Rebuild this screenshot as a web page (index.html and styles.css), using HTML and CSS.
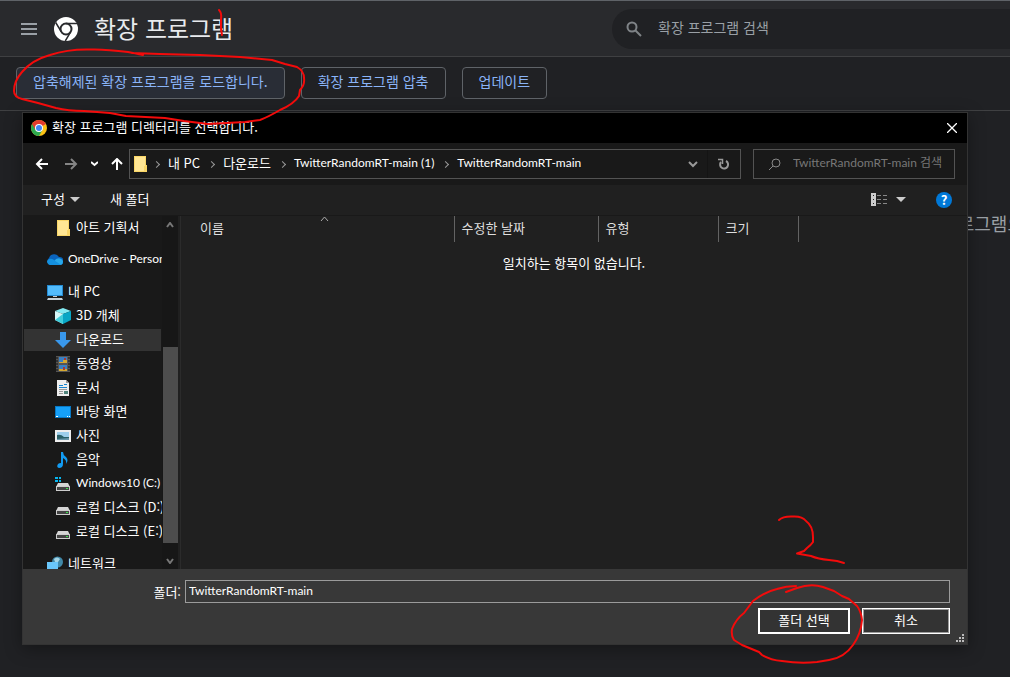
FILE: index.html
```html
<!DOCTYPE html>
<html lang="ko">

<head>
    <meta charset="UTF-8">
    <meta name="viewport" content="width=device-width, initial-scale=1.0">
    <title>확장 프로그램</title>
    <link rel="stylesheet" href="styles.css">
</head>

<body>
    <header class="topbar">
        <div class="brand">
            <button class="menu-button" aria-label="메뉴"><span></span><span></span><span></span></button>
            <svg class="logo" viewBox="0 0 24 24" width="24" height="24">
                <circle cx="12" cy="12" r="12" fill="#fff" />
                <circle cx="12" cy="12" r="5.500" fill="none" stroke="#292a2d" stroke-width="2" />
                <path d="M12 6.500H23M16.800 14.700L11.300 24M7.200 14.700L1.700 5.500" fill="none" stroke="#292a2d" stroke-width="1.500" />
            </svg>
            <h1>확장 프로그램</h1>
        </div>
        <label class="search">
            <svg viewBox="0 0 16 16" width="16" height="16" fill="none" stroke="#7f8387" stroke-width="2">
                <circle cx="6" cy="6" r="4.500" />
                <path d="M9.500 9.500L15 15" />
            </svg>
            <input type="search" placeholder="확장 프로그램 검색" aria-label="확장 프로그램 검색">
        </label>
    </header>

    <nav class="actions">
        <button class="active">압축해제된 확장 프로그램을 로드합니다.</button>
        <button>확장 프로그램 압축</button>
        <button>업데이트</button>
    </nav>

    <main class="page">
        <p>로그램으</p>
    </main>

    <section class="dialog" role="dialog" aria-labelledby="dialog-title">
        <div class="titlebar">
            <svg viewBox="0 0 16 16" width="16" height="16">
                <circle cx="8" cy="8" r="8" fill="#fbc116" />
                <path d="M8 8L1.100 4A8 8 0 0 1 14.900 4Z" fill="#e33b2e" />
                <path d="M8 8L1.100 4A8 8 0 0 0 8 16L11.500 10Z" fill="#2da94f" />
                <path d="M1.100 4L4.500 10L8 4Z" fill="#e33b2e" />
                <circle cx="8" cy="8" r="4" fill="#fff" />
                <circle cx="8" cy="8" r="3" fill="#4285f4" />
            </svg>
            <h2 id="dialog-title">확장 프로그램 디렉터리를 선택합니다.</h2>
            <button class="close" aria-label="닫기">
                <svg viewBox="0 0 10 10" width="10" height="10" stroke="#fff" stroke-width="1.300"><path d="M0 0L10 10M10 0L0 10" /></svg>
            </button>
        </div>

        <div class="address-row">
            <div class="history">
                <button aria-label="뒤로"><svg viewBox="0 0 13 12" width="13" height="12" fill="none" stroke="#fff" stroke-width="2"><path d="M13 6H2M7 1L2 6L7 11" /></svg></button>
                <button aria-label="앞으로"><svg viewBox="0 0 13 12" width="13" height="12" fill="none" stroke="#858585" stroke-width="2"><path d="M0 6H11M6 1L11 6L6 11" /></svg></button>
                <button class="recent" aria-label="최근 위치"><svg viewBox="0 0 7 6" width="7" height="6" fill="none" stroke="#fff" stroke-width="2"><path d="M0 1L3.500 4L7 1" /></svg></button>
                <button aria-label="위로"><svg viewBox="0 0 12 12" width="12" height="12" fill="none" stroke="#fff" stroke-width="2"><path d="M6 12V1M1 6L6 1L11 6" /></svg></button>
            </div>
            <div class="address">
                <svg viewBox="0 0 14 16" width="14" height="16"><path d="M0 0H12V9H13V16H0Z" fill="#f9d667" /><path d="M1 1H11V10H10V15H1Z" fill="#ffe694" /></svg>
                <i class="sep"></i><a href="#">내 PC</a>
                <i class="sep"></i><a href="#">다운로드</a>
                <i class="sep"></i><a class="latin" href="#">TwitterRandomRT-main (1)</a>
                <i class="sep"></i><a class="latin" href="#">TwitterRandomRT-main</a>
                <button class="drop" aria-label="이전 위치"><svg viewBox="0 0 10 8" width="10" height="8" fill="none" stroke="#999" stroke-width="2"><path d="M1 1L5 5L9 1" /></svg></button>
                <button class="reload" aria-label="새로 고침"><svg viewBox="0 0 12 12" width="12" height="12" fill="none" stroke="#999" stroke-width="2"><path d="M3 4A4 4 0 1 0 8 3" /><path d="M0 1.500H4.500V6" stroke-width="1.500" /></svg></button>
            </div>
            <label class="folder-search">
                <svg viewBox="0 0 13 13" width="13" height="13" fill="none" stroke="#888"><circle cx="8" cy="5" r="4" /><path d="M5 8L1 12" /></svg>
                <input class="latin" type="search" placeholder="TwitterRandomRT-main 검색" aria-label="TwitterRandomRT-main 검색">
            </label>
        </div>

        <div class="commands">
            <button>구성 <i class="caret"></i></button>
            <button>새 폴더</button>
            <button class="view" aria-label="보기">
                <svg viewBox="0 0 17 13" width="17" height="13"><path d="M0 0H5V13H0Z" fill="#ccc" /><path d="M2 2H3V3H2ZM2 6H3V7H2ZM2 10H3V11H2Z" fill="#222" /><path d="M6 2.500H10M12 2.500H16M6 6.500H10M12 6.500H16M6 10.500H10M12 10.500H16" stroke="#888" /></svg>
                <i class="caret"></i>
            </button>
            <button class="help" aria-label="도움말">?</button>
        </div>

        <div class="browser">
            <ul class="tree">
                <li class="child"><svg viewBox="0 0 16 16"><path d="M2 0H14V9H15V16H2Z" fill="#f9d667" /><path d="M3 1H13V10H12V15H3Z" fill="#ffe694" /></svg>아트 기획서</li>
                <li class="group latin"><svg viewBox="0 0 16 16"><path d="M3 13A4 4 0 0 1 2 6A5.500 5.500 0 0 1 12 5A4 4 0 0 1 13 13Z" fill="#0a64bd" /><path d="M4 13L9 7Q14 5 16 9Q16 13 13 13Z" fill="#28a8ea" /><path d="M0 9Q3 5 7 8L14 13H3Q0 12 0 9Z" fill="#1490df" /></svg>OneDrive - Personal</li>
                <li class="group"><svg viewBox="0 0 16 16"><path d="M0 1H16V12H0Z" fill="#258bd2" /><path d="M1 2H15V11H1Z" fill="#52bbfc" /><path d="M6 12H10V13H6Z" fill="#ccc" /><path d="M1 14H15L16 16H0Z" fill="#c5d0d7" /></svg>내 PC</li>
                <li class="child"><svg viewBox="0 0 16 16"><path d="M0 3L8 0L16 3L8 6Z" fill="#84eaf2" /><path d="M0 3L8 6V16L0 12Z" fill="#d5f7f8" /><path d="M0 12L8 6V16Z" fill="#40cddb" /><path d="M8 6L16 3V12L8 16Z" fill="#08a6c5" /></svg>3D 개체</li>
                <li class="child selected"><svg viewBox="0 0 16 16"><path d="M5 0H11V8H16L8 16L0 8H5Z" fill="#3998ec" /></svg>다운로드</li>
                <li class="child"><svg viewBox="0 0 16 16"><path d="M1 0H15V16H1Z" fill="#555" /><path d="M4 1H12V7H4ZM4 9H12V15H4Z" fill="#397fc4" /><path d="M4 6H8V4H12V7H4ZM4 13H12V15H4Z" fill="#d3a832" /><path d="M2 1V16M14 1V16" stroke="#111" stroke-dasharray="2 1" /><path d="M9 2H11V4H9ZM8 11H10V14H8Z" fill="#a73a32" /></svg>동영상</li>
                <li class="child"><svg viewBox="0 0 16 16"><path d="M2 0H11L14 3V16H2Z" fill="#eee" /><path d="M11 0V3H14" fill="#999" /><path d="M4 5.500H8M9 4.500H12M4 7.500H12" stroke="#1685d1" /><path d="M4 9.500H12M4 11.500H8M4 13.500H8" stroke="#999" /><path d="M9 11H13V14H9Z" fill="#4f837b" /></svg>문서</li>
                <li class="child"><svg viewBox="0 0 16 16"><path d="M0 2H16V14H0Z" fill="#0878c4" /><path d="M1 3H15V13H1Z" fill="#16a0f8" /><path d="M1 12.500H3M12 12.500H13M14 12.500H15" stroke="#fff" /></svg>바탕 화면</li>
                <li class="child"><svg viewBox="0 0 16 16"><path d="M0 2H16V14H0Z" fill="#eee" /><path d="M2 4H14V12H2Z" fill="#9dceeb" /><path d="M2 7Q6 6 9 9H14V12H2Z" fill="#285f67" /><path d="M2 11L14 10V12H2Z" fill="#6795a8" /></svg>사진</li>
                <li class="child"><svg viewBox="0 0 16 16"><path d="M6 0H8Q8 3 11 5Q14 8 11 12Q12 8 8 6V12Q8 16 4 16Q1 15 3 12Q4 11 6 11Z" fill="#129bf2" /></svg>음악</li>
                <li class="child latin"><svg viewBox="0 0 16 16"><path d="M0 1H3V3H0ZM4 1H6V3H4ZM0 4H3V6H0ZM4 4H6V6H4Z" fill="#06b5ef" /><path d="M3 7H13L15 11H1Z" fill="#d5d5d5" /><path d="M1 10H15V15H1Z" fill="#ccc" /><path d="M2 11H14V14H2Z" fill="#444" /><path d="M11 12H13V13H11Z" fill="#39e34c" /></svg>Windows10 (C:)</li>
                <li class="child"><svg viewBox="0 0 16 16"><path d="M3 7H13L15 11H1Z" fill="#d5d5d5" /><path d="M1 10H15V15H1Z" fill="#ccc" /><path d="M2 11H14V14H2Z" fill="#444" /><path d="M11 12H13V13H11Z" fill="#39e34c" /></svg>로컬 디스크 (D:)</li>
                <li class="child"><svg viewBox="0 0 16 16"><path d="M3 7H13L15 11H1Z" fill="#d5d5d5" /><path d="M1 10H15V15H1Z" fill="#ccc" /><path d="M2 11H14V14H2Z" fill="#444" /><path d="M11 12H13V13H11Z" fill="#39e34c" /></svg>로컬 디스크 (E:)</li>
                <li class="group"><svg viewBox="0 0 16 16"><circle cx="10.500" cy="6" r="5.500" fill="#4189a9" /><path d="M7 3Q10 0 13 3L11 6H8Z" fill="#a5d5e5" /><path d="M0 6H11V15H0Z" fill="#69c7fb" /></svg>네트워크</li>
            </ul>
            <div class="scrollbar">
                <svg viewBox="0 0 8 6" width="8" height="6"><path d="M1 5L4 1L7 5" /></svg>
                <span class="thumb"></span>
                <svg viewBox="0 0 8 6" width="8" height="6"><path d="M1 1L4 5L7 1" /></svg>
            </div>
            <div class="files">
                <svg class="sort" viewBox="0 0 9 5" width="9" height="5" fill="none" stroke="#aaa"><path d="M1 5L4.500 1L8 5" /></svg>
                <table>
                    <thead>
                        <tr>
                            <th class="name">이름</th>
                            <th class="date">수정한 날짜</th>
                            <th class="type">유형</th>
                            <th class="size">크기</th>
                            <th></th>
                        </tr>
                    </thead>
                    <tbody>
                        <tr>
                            <td colspan="5">일치하는 항목이 없습니다.</td>
                        </tr>
                    </tbody>
                </table>
            </div>
        </div>

        <form class="dialog-footer">
            <div class="field">
                <label for="folder">폴더:</label>
                <input id="folder" class="latin" type="text" value="TwitterRandomRT-main">
            </div>
            <div class="buttons">
                <button type="button" class="primary">폴더 선택</button>
                <button type="button">취소</button>
            </div>
            <svg class="grip" viewBox="0 0 8 8" width="8" height="8"><path d="M6 0H8V2H6ZM3 3H5V5H3ZM6 3H8V5H6ZM0 6H2V8H0ZM3 6H5V8H3ZM6 6H8V8H6Z" fill="#bbb" /></svg>
        </form>
    </section>

    <!-- hand-drawn steps -->
    <svg class="marks" viewBox="0 0 1010 677" width="1010" height="677">
        <path d="M219 10Q222 13 221 19L221 29L222 35" />
        <path d="M143 55L128 52Q105 49 90 49.500Q68 49 50 55Q32 60 22 72Q14 81 14 91Q14 97 22 99L38 103L56 108Q68 111 84 111L110 113L126 116L165 118L184 121L208 124L245 122L260 120Q268 117 280 110Q294 104 299 96L300 90Q305 85 304 78Q304 71 297 67L285 64L272 60L240 57L200 55L160 54L132 53" />
        <path d="M779 520Q783 516 793 516.500Q802 516 806 521Q813 526 813 537V542Q811 545 807 548L804 551L797 553.500L811 556Q818 559 829 560L837 561L844 563" />
        <path d="M796 586Q786 586 777 589Q764 592 753 601L744 613Q736 619 732 629Q731 636 734 640L742 645L759 652L762 655Q771 660 782 661Q800 664 817 662L829 660Q844 658 853 645Q861 634 862 620Q861 611 857 606L849 599L842 596L834 591L823 587Q811 583 797 588L786 592" />
    </svg>
</body>

</html>
```
FILE: styles.css
```css
* {
    box-sizing: border-box;
}

body {
    margin: 0;
    min-height: 100vh;
    background: #202124;
    color: #e8eaed;
    font-family: "Noto Sans CJK KR", sans-serif;
    font-size: 13px;
    line-height: 20px;
    position: relative;
    overflow: hidden;
}

button,
input {
    font: inherit;
    color: inherit;
    background: none;
    border: 0;
    padding: 0;
    outline: 0;
}

h1,
h2,
p,
ul {
    margin: 0;
    padding: 0;
    font-weight: 400;
}

svg {
    flex: none;
}

.latin {
    font-family: Lato, "Noto Sans CJK KR", sans-serif;
    font-size: 12px;
}

.topbar {
    display: flex;
    justify-content: space-between;
    height: 57px;
    background: #292a2d;
    border-top: 1px solid #5f6368;
    border-bottom: 1px solid #3f4042;
    overflow: hidden;
}

.brand {
    display: flex;
    align-items: center;
    padding-left: 21px;

    h1 {
        font-size: 24px;
        line-height: 32px;
        margin-left: 16px;
        padding-bottom: 2px;
    }
}

.menu-button {
    display: grid;
    gap: 3px;
    width: 16px;
    margin-right: 17px;

    span {
        height: 2px;
        background: #9aa0a6;
    }
}

.search {
    display: flex;
    align-items: center;
    gap: 16px;
    width: 420px;
    margin: 8px -22px 7px 0;
    padding-left: 14px;
    background: #202124;
    border-radius: 20px;
    font-size: 14px;

    input {
        flex: 1;
        padding-bottom: 4px;
    }

    input::placeholder {
        color: #9aa0a6;
        opacity: 1;
    }
}

.actions {
    display: flex;
    gap: 16px;
    padding: 10px 16px 11px;
    border-bottom: 1px solid #3f4042;

    button {
        height: 32px;
        padding: 0 16px 4px;
        border: 1px solid #5f6368;
        border-radius: 4px;
        color: #8ab4f8;
        font-size: 14px;
        line-height: 20px;
    }

    .active {
        background: #292d36;
    }
}

.page {
    display: flex;
    justify-content: flex-end;
    padding-top: 100px;
    color: #9aa0a6;
    font-size: 18px;
    line-height: 24px;

    p {
        margin-right: -14px;
    }
}

.dialog {
    position: absolute;
    top: 112px;
    right: 42px;
    bottom: 32px;
    left: 22px;
    display: flex;
    flex-direction: column;
    background: #202020;
    border: 1px solid #333;
    color: #fff;
    box-shadow: 0 4px 16px rgb(0 0 0 / .35);
}

.titlebar {
    display: flex;
    align-items: center;
    gap: 5px;
    height: 30px;
    padding: 0 10px 0 8px;
    background: #000;

    h2 {
        font-size: 13px;
        padding-bottom: 2px;
    }

    .close {
        display: flex;
        margin-left: auto;
    }
}

.address-row {
    display: flex;
    align-items: center;
    gap: 12px;
    height: 42px;
    padding: 0 12px;
    background: #191919;
}

.history {
    display: flex;
    align-items: center;
    gap: 13px;
    width: 82px;

    button {
        display: flex;
    }

    button:first-child {
        margin-right: 4px;
    }
}

.address {
    display: flex;
    align-items: center;
    flex: 1;
    gap: 9px;
    height: 30px;
    padding-left: 4px;
    border: 1px solid #535353;

    a {
        color: #fff;
        padding-bottom: 2px;
        text-decoration: none;
    }

    > svg {
        margin-right: -3px;
    }
}

.sep {
    width: 5px;
    height: 5px;
    border: solid #999;
    border-width: 1px 1px 0 0;
    transform: rotate(45deg);
}

.drop {
    margin-left: auto;
}

.reload {
    display: grid;
    place-content: center;
    width: 33px;
    height: 28px;
    border-left: 1px solid #141414;
}

.folder-search {
    display: flex;
    align-items: center;
    gap: 12px;
    width: 202px;
    height: 30px;
    padding-left: 14px;
    border: 1px solid #535353;

    input {
        flex: 1;
        min-width: 0;
        padding-bottom: 2px;
    }

    input::placeholder {
        color: #777;
        opacity: 1;
    }
}

.commands {
    display: flex;
    align-items: center;
    gap: 30px;
    height: 31px;
    padding: 0 15px 0 18px;
    border-bottom: 1px solid #191919;

    button {
        display: flex;
        align-items: center;
        gap: 5px;
        padding-bottom: 2px;
    }

    .view {
        gap: 8px;
        margin-left: auto;
    }

    .help {
        justify-content: center;
        width: 16px;
        height: 16px;
        padding: 0;
        border-radius: 50%;
        background: #0078d7;
        font-weight: 700;
        line-height: 16px;
    }
}

.caret {
    border: 5px solid transparent;
    border-top-color: #ccc;
    border-bottom: 0;
}

.browser {
    display: flex;
    flex: 1;
    min-height: 0;
}

.tree {
    width: 139px;
    padding-left: 1px;
    background: #191919;
    list-style: none;
    overflow: hidden;
    white-space: nowrap;

    li {
        display: flex;
        align-items: center;
        gap: 5px;
        height: 24px;
        padding-bottom: 2px;
        line-height: 20px;
        border: solid #191919;
        border-width: 1px 1px 1px 0;
    }

    svg {
        width: 16px;
        height: 16px;
        margin-top: 2px;
    }

    .child {
        padding-left: 31px;
    }

    .group {
        padding-left: 23px;
    }

    .child + .group,
    .group + .group {
        margin-top: 8px;
    }

    .selected {
        background: #333;
    }
}

.scrollbar {
    display: flex;
    flex-direction: column;
    align-items: center;
    justify-content: space-between;
    width: 16px;
    padding: 6px 0 5px;
    background: #171717;

    path {
        fill: none;
        stroke: #777;
        stroke-width: 2;
    }

    .thumb {
        width: 15px;
        height: 196px;
        margin: auto 0 15px;
        background: #4d4d4d;
    }
}

.files {
    position: relative;
    flex: 1;
    margin-left: 2px;
    border-left: 1px solid #2b2b2b;

    .sort {
        position: absolute;
        top: 0;
        left: 139px;
    }

    table {
        width: 100%;
        table-layout: fixed;
        border-collapse: collapse;
    }

    th {
        height: 26px;
        padding: 0 0 2px 7px;
        border-right: 1px solid #636363;
        color: #dedede;
        font-weight: 400;
        text-align: left;
    }

    th:last-child {
        border-right: 0;
    }

    .name {
        width: 273px;
        padding-left: 19px;
    }

    .date {
        width: 144px;
    }

    .type {
        width: 120px;
    }

    .size {
        width: 80px;
    }

    td {
        padding: 11px 0;
        text-align: center;
    }
}

.dialog-footer {
    position: relative;
    padding: 11px 17px 10px;
    background: #383838;
}

.field {
    display: flex;
    align-items: center;
    gap: 4px;
    padding-left: 113px;

    label {
        width: 28px;
        text-align: right;
        white-space: nowrap;
    }

    input {
        flex: 1;
        height: 23px;
        padding: 0 3px 2px;
        border: 1px solid #9b9b9b;
    }
}

.buttons {
    display: flex;
    justify-content: flex-end;
    gap: 12px;
    margin-top: 5px;

    button {
        width: 88px;
        height: 26px;
        padding-bottom: 2px;
        border: 1px solid #fff;
        box-shadow: inset 0 0 0 1px #9b9b9b;
        background: #333;
    }

    .primary {
        width: 92px;
        border-width: 2px;
        box-shadow: none;
    }
}

.grip {
    position: absolute;
    right: 3px;
    bottom: 2px;
}

.marks {
    position: absolute;
    top: 0;
    left: 0;
    pointer-events: none;

    path {
        fill: none;
        stroke: #f30b0b;
        stroke-width: 2;
        stroke-linecap: round;
        stroke-linejoin: round;
    }
}
```
